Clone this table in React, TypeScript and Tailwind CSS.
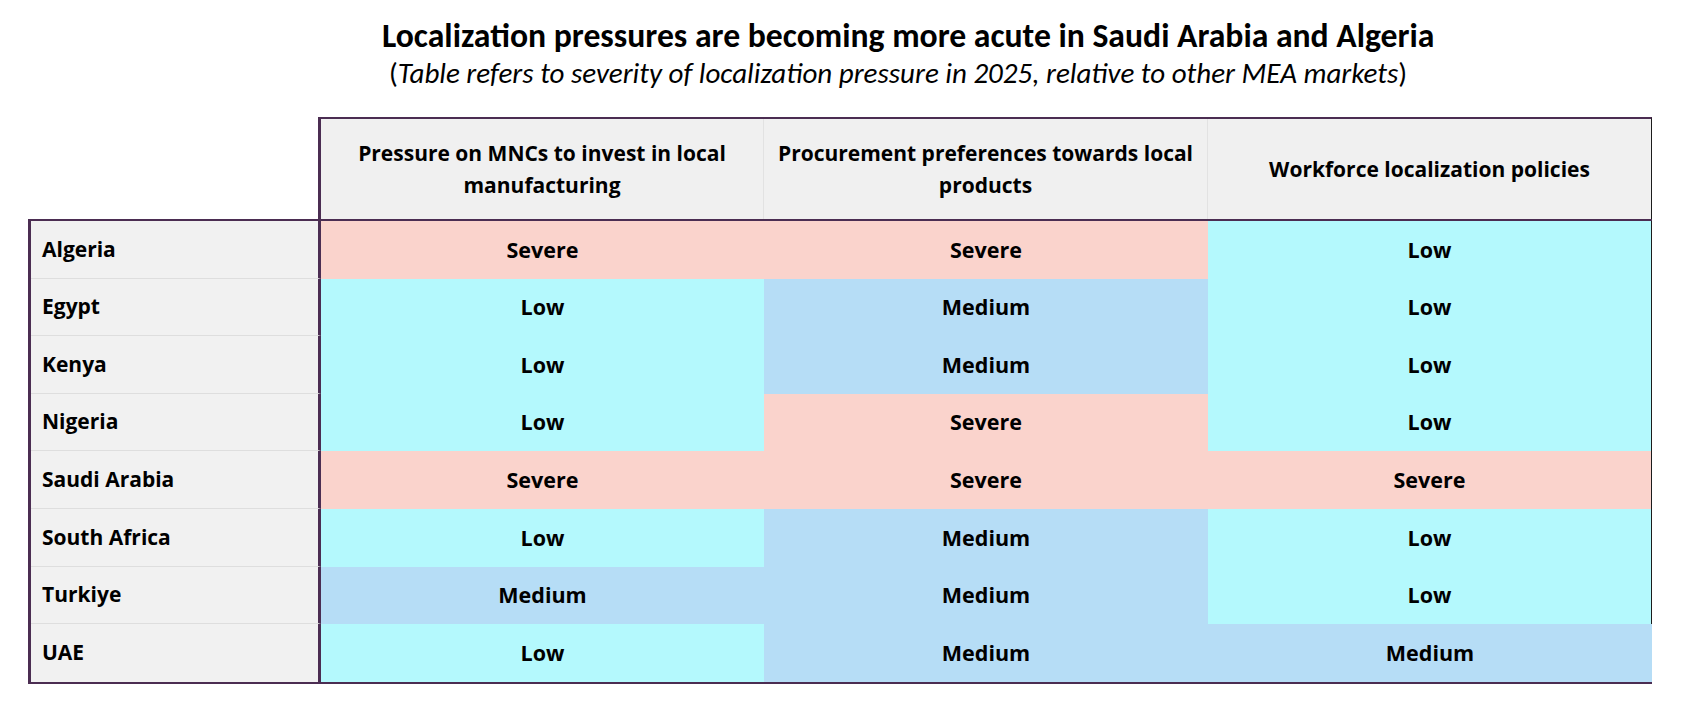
type Level = "Severe" | "Medium" | "Low"

const levelBg: Record<Level, string> = {
  Severe: "bg-[#fad3cc]",
  Medium: "bg-[#b6ddf6]",
  Low: "bg-[#b4f9fd]",
}

const columns = [
  "Pressure on MNCs to invest in local manufacturing",
  "Procurement preferences towards local products",
  "Workforce localization policies",
]

const rows: { country: string; values: Level[] }[] = [
  { country: "Algeria", values: ["Severe", "Severe", "Low"] },
  { country: "Egypt", values: ["Low", "Medium", "Low"] },
  { country: "Kenya", values: ["Low", "Medium", "Low"] },
  { country: "Nigeria", values: ["Low", "Severe", "Low"] },
  { country: "Saudi Arabia", values: ["Severe", "Severe", "Severe"] },
  { country: "South Africa", values: ["Low", "Medium", "Low"] },
  { country: "Turkiye", values: ["Medium", "Medium", "Low"] },
  { country: "UAE", values: ["Low", "Medium", "Medium"] },
]

const titleFont = { fontFamily: '"Carlito", "Lato", "Liberation Sans", sans-serif' }

export default function App() {
  return (
    <div
      className="w-[1683px] h-[701px] bg-white text-black overflow-hidden"
      style={{ fontFamily: '"Open Sans", "Noto Sans", sans-serif' }}
    >
      {/* Title block */}
      <div className="pt-[16px] pl-[382px]" style={titleFont}>
        <h1 className="text-[33.7px] leading-[40px] font-bold whitespace-nowrap">
          Localization pressures are becoming more acute in Saudi Arabia and Algeria
        </h1>
        <p className="text-[29px] leading-[35px] whitespace-nowrap ml-[7px]">
          (<span className="italic">Table refers to severity of localization pressure in 2025, relative to other MEA markets</span>)
        </p>
      </div>

      {/* Table */}
      <div className="ml-[28px] mt-[26px] w-[1624px]">
        {/* Header */}
        <div className="flex">
          <div className="w-[290px] shrink-0" />
          <div className="flex flex-1 h-[102px] bg-[#f0f0f0] border-t-2 border-l-[3px] border-r-[1.5px] border-t-[#4b2d52] border-l-[#4b2d52] border-r-[#1c1c1c]">
            {columns.map((c, i) => (
              <div
                key={c}
                className={`flex items-center justify-center text-center px-2 text-[21px] leading-[32px] font-bold ${
                  i === 0 ? "w-[443px] border-r border-[#e2e2e2]" : i === 1 ? "w-[444px] border-r border-[#e2e2e2]" : "flex-1"
                }`}
              >
                {c}
              </div>
            ))}
          </div>
        </div>

        {/* Body */}
        <div className="border-t-2 border-l-[3px] border-b-2 border-[#4b2d52]">
          {rows.map((r, ri) => (
            <div key={r.country} className="flex h-[57.6px]">
              <div
                className={`w-[290px] shrink-0 flex items-center pl-[11px] bg-[#f1f1f1] text-[21px] font-bold border-r-[3px] border-r-[#4b2d52] ${
                  ri < rows.length - 1 ? "border-b border-b-[#dedede]" : ""
                }`}
              >
                {r.country}
              </div>
              {r.values.map((v, ci) => (
                <div
                  key={ci}
                  className={`flex items-center justify-center text-[21.5px] font-bold ${levelBg[v]} ${
                    ci === 0 ? "w-[443px]" : ci === 1 ? "w-[444px]" : "flex-1"
                  } ${ci === 2 && ri < rows.length - 1 ? "border-r-[1.5px] border-r-[#1c1c1c]" : ""}`}
                >
                  {v}
                </div>
              ))}
            </div>
          ))}
        </div>
      </div>
    </div>
  )
}
